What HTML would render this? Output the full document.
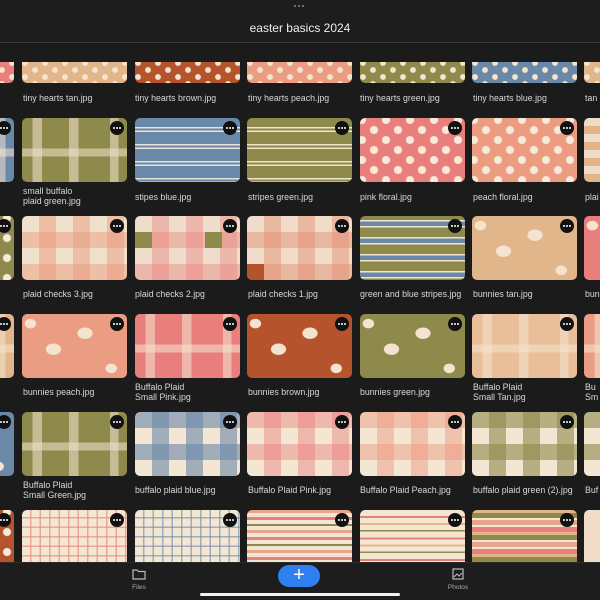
<!DOCTYPE html><html><head><meta charset="utf-8"><style>
*{margin:0;padding:0;box-sizing:border-box}
body{width:600px;height:600px;background:#1b1b1b;position:relative;overflow:hidden;font-family:"Liberation Sans",sans-serif}
.t{position:absolute;width:105px;height:64px;border-radius:5px;overflow:hidden}
.d{position:absolute;right:3px;top:3px;width:14px;height:14px;border-radius:50%;background:#111;}
.d:after{content:"";position:absolute;left:3px;top:6px;width:2px;height:2px;background:#fff;border-radius:1px;box-shadow:3px 0 #fff,6px 0 #fff}
.l{position:absolute;color:#d8d8d8;font-size:8.8px;line-height:10px;width:110px}
.c{--b:#fff;background-color:var(--b)}
.h{background-image:radial-gradient(circle,#f4e4cf 2.6px,transparent 3.2px),radial-gradient(circle,#f4e4cf 2.6px,transparent 3.2px);background-size:20px 14px,20px 14px;background-position:3px 2px,13px 9px}
.f{background-image:radial-gradient(circle,#f6eadb 3.5px,transparent 4.5px),radial-gradient(circle,#f6eadb 3.5px,transparent 4.5px);background-size:24px 20px;background-position:2px 2px,14px 12px}
.bn{background-image:radial-gradient(ellipse 8px 6px at 30% 55%,#f4e4cf 90%,transparent),radial-gradient(ellipse 8px 6px at 60% 30%,#f4e4cf 90%,transparent),radial-gradient(ellipse 6px 5px at 8% 15%,#f4e4cf 90%,transparent),radial-gradient(ellipse 6px 5px at 85% 85%,#f4e4cf 90%,transparent)}
.bp{background-image:linear-gradient(90deg,transparent 10%,rgba(244,228,207,.55) 10%,rgba(244,228,207,.55) 19%,transparent 19%,transparent 45%,rgba(244,228,207,.55) 45%,rgba(244,228,207,.55) 54%,transparent 54%,transparent 84%,rgba(244,228,207,.55) 84%,rgba(244,228,207,.55) 92%,transparent 92%),linear-gradient(0deg,transparent 40%,rgba(244,228,207,.55) 40%,rgba(244,228,207,.55) 52%,transparent 52%)}
.bc{background-image:repeating-linear-gradient(90deg,rgba(0,0,0,0) 0 17px,var(--k) 17px 34px),repeating-linear-gradient(0deg,rgba(0,0,0,0) 0 16px,var(--k) 16px 32px)}
.pc{background-image:repeating-linear-gradient(90deg,rgba(0,0,0,0) 0 17px,var(--k) 17px 34px),repeating-linear-gradient(180deg,rgba(0,0,0,0) 0 16px,var(--k) 16px 32px)}
.g{background-image:repeating-linear-gradient(90deg,transparent 0 8px,var(--k) 8px 9.5px),repeating-linear-gradient(0deg,transparent 0 8px,var(--k) 8px 9.5px)}
</style></head><body>
<div style="position:absolute;left:0;top:0;width:600px;height:62px;background:#1b1b1b;z-index:5">
<div style="position:absolute;left:0;top:0;width:600px;height:43px;background:#1d1d1d;border-bottom:1px solid #3a3a3a"></div>
<div style="position:absolute;left:294px;top:5px;width:2px;height:2px;background:#888;border-radius:1px;box-shadow:4px 0 #888,8px 0 #888"></div>
<div style="position:absolute;left:0;width:600px;top:21px;text-align:center;color:#eee;font-size:12px">easter basics 2024</div></div>

<!-- Row 1 -->
<div class="t c h" style="left:-91px;top:19px;--b:#e97f7d"></div>
<div class="t c h" style="left:22px;top:19px;--b:#e2b68b"></div>
<div class="t c h" style="left:135px;top:19px;--b:#b5532c"></div>
<div class="t c h" style="left:247px;top:19px;--b:#eb9d83"></div>
<div class="t c h" style="left:360px;top:19px;--b:#8e8a4c"></div>
<div class="t c h" style="left:472px;top:19px;--b:#6a88a8"></div>
<div class="t c h" style="left:584px;top:19px;--b:#e2b68b"></div>
<div class="l" style="left:23px;top:93px">tiny hearts tan.jpg</div>
<div class="l" style="left:135px;top:93px">tiny hearts brown.jpg</div>
<div class="l" style="left:248px;top:93px">tiny hearts peach.jpg</div>
<div class="l" style="left:360px;top:93px">tiny hearts green.jpg</div>
<div class="l" style="left:473px;top:93px">tiny hearts blue.jpg</div>
<div class="l" style="left:585px;top:93px">tan</div>

<!-- Row 2 -->
<div class="t c bp" style="left:-91px;top:118px;--b:#6a88a8"><div class="d"></div></div>
<div class="t c bp" style="left:22px;top:118px;--b:#8e8a4c"><div class="d"></div></div>
<div class="t c" style="left:135px;top:118px;--b:#6a88a8;background-image:repeating-linear-gradient(180deg,transparent 0 9px,#e6e2d8 9px 10.5px,transparent 10.5px 12.5px,#e6e2d8 12.5px 14px,transparent 14px 17px)"><div class="d"></div></div>
<div class="t c" style="left:247px;top:118px;--b:#8e8a4c;background-image:repeating-linear-gradient(180deg,transparent 0 9px,#f0e3c9 9px 10.5px,transparent 10.5px 12.5px,#f0e3c9 12.5px 14px,transparent 14px 17px)"><div class="d"></div></div>
<div class="t c f" style="left:360px;top:118px;--b:#e97f7d"><div class="d"></div></div>
<div class="t c f" style="left:472px;top:118px;--b:#ec9c80"><div class="d"></div></div>
<div class="t c" style="left:584px;top:118px;--b:#e8c9a8;background-image:repeating-linear-gradient(180deg,#f0dcc6 0 8px,#e2b68b 8px 16px)"></div>
<div class="l" style="left:23px;top:186px">small buffalo<br>plaid green.jpg</div>
<div class="l" style="left:135px;top:192px">stipes blue.jpg</div>
<div class="l" style="left:248px;top:192px">stripes green.jpg</div>
<div class="l" style="left:360px;top:192px">pink floral.jpg</div>
<div class="l" style="left:473px;top:192px">peach floral.jpg</div>
<div class="l" style="left:585px;top:192px">plai</div>

<!-- Row 3 -->
<div class="t c f" style="left:-91px;top:216px;--b:#8e8a4c"><div class="d"></div></div>
<div class="t c pc" style="left:22px;top:216px;--b:#f0e1cd;--k:rgba(234,150,120,.45)"><div class="d"></div></div>
<div class="t c pc" style="left:135px;top:216px;--b:#f0dccb;--k:rgba(233,130,125,.4)"><div style="position:absolute;left:0;top:16px;width:17px;height:16px;background:#8e8a4c"></div><div style="position:absolute;left:70px;top:16px;width:17px;height:16px;background:#8e8a4c"></div><div class="d"></div></div>
<div class="t c pc" style="left:247px;top:216px;--b:#efdccb;--k:rgba(226,140,110,.45)"><div style="position:absolute;left:0;top:48px;width:17px;height:16px;background:#b5532c"></div><div class="d"></div></div>
<div class="t c" style="left:360px;top:216px;--b:#8e8a4c;background-image:repeating-linear-gradient(180deg,transparent 0 4px,#f0e3c9 4px 5.5px,#6a88a8 5.5px 10px,#f0e3c9 10px 11.5px,transparent 11.5px 17px)"><div class="d"></div></div>
<div class="t c bn" style="left:472px;top:216px;--b:#e2b68b"><div class="d"></div></div>
<div class="t c bn" style="left:584px;top:216px;--b:#e97f7d"></div>
<div class="l" style="left:23px;top:289px">plaid checks 3.jpg</div>
<div class="l" style="left:135px;top:289px">plaid checks 2.jpg</div>
<div class="l" style="left:248px;top:289px">plaid checks 1.jpg</div>
<div class="l" style="left:360px;top:289px">green and blue stripes.jpg</div>
<div class="l" style="left:473px;top:289px">bunnies tan.jpg</div>
<div class="l" style="left:585px;top:289px">bun</div>

<!-- Row 4 -->
<div class="t c bp" style="left:-91px;top:314px;--b:#e2b68b"><div class="d"></div></div>
<div class="t c bn" style="left:22px;top:314px;--b:#eb9d83"><div class="d"></div></div>
<div class="t c bp" style="left:135px;top:314px;--b:#e97f7d"><div class="d"></div></div>
<div class="t c bn" style="left:247px;top:314px;--b:#b5532c"><div class="d"></div></div>
<div class="t c bn" style="left:360px;top:314px;--b:#8e8a4c"><div class="d"></div></div>
<div class="t c bp" style="left:472px;top:314px;--b:#e8bf98"><div class="d"></div></div>
<div class="t c bp" style="left:584px;top:314px;--b:#eb9d83"></div>
<div class="l" style="left:23px;top:387px">bunnies peach.jpg</div>
<div class="l" style="left:135px;top:382px">Buffalo Plaid<br>Small Pink.jpg</div>
<div class="l" style="left:248px;top:387px">bunnies brown.jpg</div>
<div class="l" style="left:360px;top:387px">bunnies green.jpg</div>
<div class="l" style="left:473px;top:382px">Buffalo Plaid<br>Small Tan.jpg</div>
<div class="l" style="left:585px;top:382px">Bu<br>Sm</div>

<!-- Row 5 -->
<div class="t c bn" style="left:-91px;top:412px;--b:#6a88a8"><div class="d"></div></div>
<div class="t c bp" style="left:22px;top:412px;--b:#8e8a4c"><div class="d"></div></div>
<div class="t c bc" style="left:135px;top:412px;--b:#f3e6d3;--k:rgba(106,136,168,.6)"><div class="d"></div></div>
<div class="t c bc" style="left:247px;top:412px;--b:#f3e6d3;--k:rgba(233,127,125,.45)"><div class="d"></div></div>
<div class="t c bc" style="left:360px;top:412px;--b:#f3e6d3;--k:rgba(236,150,125,.45)"><div class="d"></div></div>
<div class="t c bc" style="left:472px;top:412px;--b:#f3e6d3;--k:rgba(142,138,76,.6)"><div class="d"></div></div>
<div class="t c bc" style="left:584px;top:412px;--b:#f3e6d3;--k:rgba(142,138,76,.6)"></div>
<div class="l" style="left:23px;top:480px">Buffalo Plaid<br>Small Green.jpg</div>
<div class="l" style="left:135px;top:485px">buffalo plaid blue.jpg</div>
<div class="l" style="left:248px;top:485px">Buffalo Plaid Pink.jpg</div>
<div class="l" style="left:360px;top:485px">Buffalo Plaid Peach.jpg</div>
<div class="l" style="left:473px;top:485px">buffalo plaid green (2).jpg</div>
<div class="l" style="left:585px;top:485px">Buf</div>

<!-- Row 6 -->
<div class="t c f" style="left:-91px;top:510px;--b:#b5532c"><div class="d"></div></div>
<div class="t c g" style="left:22px;top:510px;--b:#f3e6d3;--k:rgba(233,140,125,.7)"><div class="d"></div></div>
<div class="t c g" style="left:135px;top:510px;--b:#f3e6d3;--k:rgba(106,136,168,.6)"><div class="d"></div></div>
<div class="t c" style="left:247px;top:510px;--b:#f2dcc6;background-image:repeating-linear-gradient(180deg,#e9a58c 0 3px,#f3e6d3 3px 7px,#e97f7d 7px 10px,#f3e6d3 10px 14px,#8e8a4c 14px 16px,#f3e6d3 16px 20px)"><div class="d"></div></div>
<div class="t c" style="left:360px;top:510px;--b:#f3e6d3;background-image:repeating-linear-gradient(180deg,#f3e6d3 0 6px,#e97f7d 6px 8px,#f3e6d3 8px 13px,#e2b68b 13px 15px,#f3e6d3 15px 20px,#8e8a4c 20px 21.5px)"><div class="d"></div></div>
<div class="t c" style="left:472px;top:510px;--b:#e2b68b;background-image:repeating-linear-gradient(180deg,#e2b68b 0 3px,#8e8a4c 3px 8px,#f3e6d3 8px 10px,#e9a58c 10px 15px,#f3e6d3 15px 17px,#e97f7d 17px 22px)"><div class="d"></div></div>
<div class="t c" style="left:584px;top:510px;--b:#f0dcc6"></div>

<!-- bottom bar -->
<div style="position:absolute;left:0;top:562px;width:600px;height:38px;background:#1d1d1d;border-top:1px solid #2c2c2c">
<svg style="position:absolute;left:132px;top:5px" width="14" height="12" viewBox="0 0 14 12"><path d="M1 2h4l1.5 1.5H13V11H1z" fill="none" stroke="#bbb" stroke-width="1.2"/></svg>
<div style="position:absolute;left:124px;top:21px;width:30px;text-align:center;color:#aaa;font-size:6.5px">Files</div>
<div style="position:absolute;left:278px;top:2px;width:42px;height:22px;border-radius:11px;background:#2f7ff0;color:#fff;text-align:center;font-size:20px;line-height:21px;font-weight:300">+</div>
<svg style="position:absolute;left:452px;top:5px" width="12" height="12" viewBox="0 0 12 12"><rect x="1" y="1" width="10" height="10" fill="none" stroke="#bbb" stroke-width="1.2"/><path d="M2 9l3-3 2 2 3-3" fill="none" stroke="#bbb" stroke-width="1"/></svg>
<div style="position:absolute;left:443px;top:21px;width:30px;text-align:center;color:#aaa;font-size:6.5px">Photos</div>
<div style="position:absolute;left:200px;top:30px;width:200px;height:3px;border-radius:2px;background:#f2f2f2"></div>
</div>
</body></html>
